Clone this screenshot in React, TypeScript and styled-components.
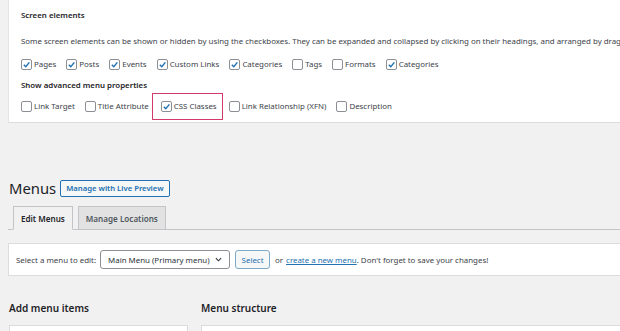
import React from "react"
import styled, { createGlobalStyle } from "styled-components"

const Global = createGlobalStyle`
  html, body {
    margin: 0;
    padding: 0;
    background: #f1f1f1;
    overflow: hidden;
  }
  body {
    font-family: "Noto Sans", "Open Sans", sans-serif;
    color: #3c434a;
    font-size: 7.9px;
  }
`

const Page = styled.div`
  width: 1000px;
  padding-left: 8px;
`

const ScreenOptions = styled.div`
  box-sizing: border-box;
  height: 123px;
  background: #fff;
  border-left: 1px solid #e2e4e7;
  border-bottom: 1px solid #dcdcde;
  padding: 9px 0 0 12px;
`

const Legend = styled.div<{ $gap?: number }>`
  font-weight: 600;
  color: #1d2327;
  line-height: 12px;
  margin-top: ${(p) => p.$gap ?? 0}px;
`

const Desc = styled.p`
  margin: 14px 0 0;
  line-height: 12px;
  white-space: nowrap;
  color: #3c434a;
`

const CheckRow = styled.div<{ $gap: number }>`
  display: flex;
  align-items: center;
  height: 12px;
  margin-top: ${(p) => p.$gap}px;
`

const Item = styled.label<{ $highlight?: boolean }>`
  position: relative;
  display: flex;
  align-items: center;
  gap: 2px;
  margin-right: 10px;
  white-space: nowrap;
  color: #3c434a;

  ${(p) =>
    p.$highlight &&
    `
    margin-left: 2px;
    margin-right: 12px;
    &::after {
      content: "";
      position: absolute;
      top: -8px;
      bottom: -8px;
      left: -9px;
      right: -6px;
      border: 1.5px solid #d33a6a;
    }
  `}
`

const Box = styled.span`
  box-sizing: border-box;
  width: 11px;
  height: 11px;
  border: 1px solid #8c8f94;
  border-radius: 2px;
  background: #fff;
  display: inline-flex;
  align-items: center;
  justify-content: center;
  flex-shrink: 0;
`

const Check = ({ on, label, highlight }: { on?: boolean; label: string; highlight?: boolean }) => (
  <Item $highlight={highlight}>
    <Box>
      {on && (
        <svg width="9" height="9" viewBox="0 0 10 10">
          <path d="M2 5.2 L4.2 7.4 L8.2 2.6" fill="none" stroke="#2271b1" strokeWidth="1.6" />
        </svg>
      )}
    </Box>
    {label}
  </Item>
)

const TitleRow = styled.div`
  display: flex;
  align-items: center;
  gap: 4px;
  margin-top: 55px;
  padding-left: 1px;
  height: 20px;
`

const Title = styled.h1`
  margin: 0;
  font-size: 14.8px;
  font-weight: 400;
  color: #1d2327;
  line-height: 20px;
`

const OutlineButton = styled.button`
  font-family: inherit;
  font-size: 7.7px;
  font-weight: 600;
  color: #2271b1;
  background: #f6f7f7;
  border: 1px solid #2271b1;
  border-radius: 2px;
  height: 17px;
  padding: 0 5px;
  line-height: 15px;
`

const Tabs = styled.div`
  display: flex;
  gap: 5px;
  margin-top: 8px;
  padding-left: 5px;
  border-bottom: 1px solid #c3c4c7;
  height: 23px;
`

const Tab = styled.div<{ $active?: boolean }>`
  box-sizing: border-box;
  height: 24px;
  padding: 0 7px;
  display: flex;
  align-items: center;
  font-weight: 600;
  font-size: 8.1px;
  border: 1px solid #c3c4c7;
  color: ${(p) => (p.$active ? "#1d2327" : "#50575e")};
  background: ${(p) => (p.$active ? "#f1f1f1" : "#e2e2e2")};
  border-bottom-color: ${(p) => (p.$active ? "#f1f1f1" : "#c3c4c7")};
`

const SelectBar = styled.div`
  box-sizing: border-box;
  margin-top: 13px;
  height: 33px;
  background: #fff;
  border: 1px solid #dcdcde;
  display: flex;
  align-items: center;
  padding-left: 7px;
  white-space: nowrap;
`

const SelectBox = styled.div`
  box-sizing: border-box;
  margin-left: 4px;
  width: 130px;
  height: 19px;
  border: 1px solid #8c8f94;
  border-radius: 3px;
  display: flex;
  align-items: center;
  justify-content: space-between;
  padding: 0 7px;
  color: #2c3338;
`

const SmallButton = styled.button`
  font-family: inherit;
  font-size: 7.9px;
  color: #2271b1;
  background: #f6f7f7;
  border: 1px solid #7fa9c9;
  border-radius: 3px;
  height: 19px;
  width: 35px;
  padding: 0;
  margin: 0 5px;
`

const Link = styled.a`
  color: #2271b1;
  text-decoration: underline;
  margin-left: 3px;
`

const Columns = styled.div`
  display: grid;
  grid-template-columns: 179px 1fr;
  column-gap: 13px;
  margin-top: 25px;
  padding-left: 1px;
`

const ColHead = styled.h2`
  margin: 0;
  font-size: 10px;
  font-weight: 600;
  color: #1d2327;
  line-height: 14px;
`

const Card = styled.div`
  margin-top: 10px;
  height: 40px;
  background: #fff;
  border: 1px solid #dcdcde;
`

export default function App() {
  return (
    <Page>
      <Global />
      <ScreenOptions>
        <Legend>Screen elements</Legend>
        <Desc>
          Some screen elements can be shown or hidden by using the checkboxes. They can be expanded and collapsed by
          clicking on their headings, and arranged by dragging and dropping.
        </Desc>
        <CheckRow $gap={11}>
          <Check on label="Pages" />
          <Check on label="Posts" />
          <Check on label="Events" />
          <Check on label="Custom Links" />
          <Check on label="Categories" />
          <Check label="Tags" />
          <Check label="Formats" />
          <Check on label="Categories" />
        </CheckRow>
        <Legend $gap={9}>Show advanced menu properties</Legend>
        <CheckRow $gap={9}>
          <Check label="Link Target" />
          <Check label="Title Attribute" />
          <Check on highlight label="CSS Classes" />
          <Check label="Link Relationship (XFN)" />
          <Check label="Description" />
        </CheckRow>
      </ScreenOptions>

      <TitleRow>
        <Title>Menus</Title>
        <OutlineButton>Manage with Live Preview</OutlineButton>
      </TitleRow>

      <Tabs>
        <Tab $active>Edit Menus</Tab>
        <Tab>Manage Locations</Tab>
      </Tabs>

      <SelectBar>
        Select a menu to edit:
        <SelectBox>
          Main Menu (Primary menu)
          <svg width="7" height="5" viewBox="0 0 8 5">
            <path d="M1 1 L4 4 L7 1" fill="none" stroke="#2c3338" strokeWidth="1.2" />
          </svg>
        </SelectBox>
        <SmallButton>Select</SmallButton>
        or <Link>create a new menu</Link>. Don't forget to save your changes!
      </SelectBar>

      <Columns>
        <div>
          <ColHead>Add menu items</ColHead>
          <Card />
        </div>
        <div>
          <ColHead>Menu structure</ColHead>
          <Card />
        </div>
      </Columns>
    </Page>
  )
}
